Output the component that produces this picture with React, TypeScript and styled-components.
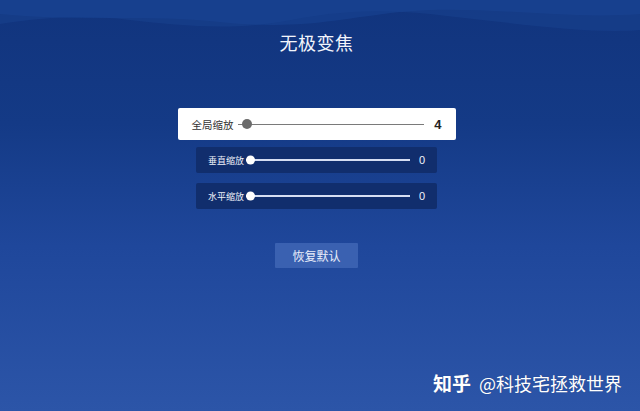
import React from 'react';
import styled, { createGlobalStyle } from 'styled-components';

const GlobalStyle = createGlobalStyle`
	html, body {
		margin: 0;
		padding: 0;
	}
	body {
		font-family: "Noto Sans", "Noto Sans CJK SC", sans-serif;
	}
`;

const Screen = styled.div`
	position: relative;
	box-sizing: border-box;
	width: 640px;
	height: 411px;
	padding-right: 7px;
	overflow: hidden;
	display: flex;
	flex-direction: column;
	align-items: center;
	background: linear-gradient(180deg, #11347d 0%, #143a86 30%, #1f479b 60%, #2c55a8 100%);
`;

const Waves = styled.svg`
	position: absolute;
	top: 0;
	left: 0;
	width: 640px;
	height: 50px;
`;

const Title = styled.h1`
	position: relative;
	margin: 30px 0 0;
	font-size: 18px;
	font-weight: 400;
	line-height: 26px;
	color: #f2f5fc;
	letter-spacing: 0.5px;
`;

const Panel = styled.div`
	position: relative;
	display: flex;
	flex-direction: column;
	align-items: center;
	gap: 10px;
	margin-top: 52px;
`;

const SliderRow = styled.div<{ $active?: boolean }>`
	display: flex;
	align-items: center;
	box-sizing: border-box;
	width: ${(p) => (p.$active ? 278 : 241)}px;
	height: ${(p) => (p.$active ? 32 : 26)}px;
	padding: 0 ${(p) => (p.$active ? 14 : 12)}px;
	background: ${(p) => (p.$active ? '#ffffff' : '#112e6d')};
	border-radius: 2px;
	margin-bottom: ${(p) => (p.$active ? -3 : 0)}px;
`;

const Label = styled.span<{ $active?: boolean }>`
	flex: none;
	font-family: "Noto Sans CJK SC", sans-serif;
	font-size: ${(p) => (p.$active ? 10.5 : 9)}px;
	color: ${(p) => (p.$active ? '#333' : '#f0f3fa')};
	margin-right: ${(p) => (p.$active ? 4 : 2)}px;
	white-space: nowrap;
`;

const Track = styled.div<{ $active?: boolean }>`
	position: relative;
	flex: 1;
	height: ${(p) => (p.$active ? 1 : 2)}px;
	background: ${(p) => (p.$active ? '#7a7a7a' : '#d6def2')};
`;

const Thumb = styled.span<{ $active?: boolean }>`
	position: absolute;
	top: 50%;
	width: ${(p) => (p.$active ? 10 : 9)}px;
	height: ${(p) => (p.$active ? 10 : 9)}px;
	border-radius: 50%;
	background: ${(p) => (p.$active ? '#6b6b6b' : '#ffffff')};
	transform: translate(0, -50%);
	margin-left: ${(p) => (p.$active ? -3 : 0)}px;
`;

const Value = styled.span<{ $active?: boolean }>`
	flex: none;
	width: ${(p) => (p.$active ? 18 : 15)}px;
	text-align: right;
	font-family: "Liberation Sans", sans-serif;
	font-size: ${(p) => (p.$active ? 13 : 11)}px;
	font-weight: ${(p) => (p.$active ? 700 : 400)};
	color: ${(p) => (p.$active ? '#222' : '#f0f3fa')};
`;

const ResetButton = styled.button`
	position: relative;
	margin-top: 34px;
	width: 83px;
	height: 25px;
	border: none;
	border-radius: 1px;
	background: #3a61b1;
	color: #e9eefa;
	font-family: "Noto Sans CJK SC", sans-serif;
	font-size: 12px;
	padding: 0;
	cursor: pointer;
`;

const Watermark = styled.div`
	position: absolute;
	right: 18px;
	bottom: 17px;
	display: flex;
	align-items: baseline;
	gap: 8px;
	color: #ffffff;
	font-family: "Noto Sans CJK SC", sans-serif;
	font-size: 18px;
	line-height: 21px;
	text-shadow: 0 0 1px rgba(0, 0, 0, 0.25);
`;

const Brand = styled.span`
	font-weight: 700;
	font-size: 19px;
`;

type SliderProps = {
	label: string;
	value: number;
	percent: number;
	active?: boolean;
};

const Slider = ({ label, value, percent, active }: SliderProps) => (
	<SliderRow $active={active}>
		<Label $active={active}>{label}</Label>
		<Track $active={active}>
			<Thumb $active={active} style={{ left: `${percent}%` }} />
		</Track>
		<Value $active={active}>{value}</Value>
	</SliderRow>
);

const App = () => {
	return (
		<Screen>
			<GlobalStyle />
			<Waves viewBox="0 0 640 50" preserveAspectRatio="none">
				<path d="M0 0 H640 V14 C560 20 480 4 400 12 C330 20 300 30 220 22 C150 14 80 22 0 14 Z" fill="#17408d" opacity="0.8" />
				<path d="M0 0 H640 V30 C590 34 520 24 430 14 C370 8 330 12 280 22 C230 30 180 26 130 20 C80 14 40 18 0 24 Z" fill="#1a4492" opacity="0.45" />
			</Waves>
			<Title>无极变焦</Title>
			<Panel>
				<Slider label="全局缩放" value={4} percent={4} active />
				<Slider label="垂直缩放" value={0} percent={0} />
				<Slider label="水平缩放" value={0} percent={0} />
			</Panel>
			<ResetButton>恢复默认</ResetButton>
			<Watermark>
				<Brand>知乎</Brand>
				<span>@科技宅拯救世界</span>
			</Watermark>
		</Screen>
	);
};

export default App;
